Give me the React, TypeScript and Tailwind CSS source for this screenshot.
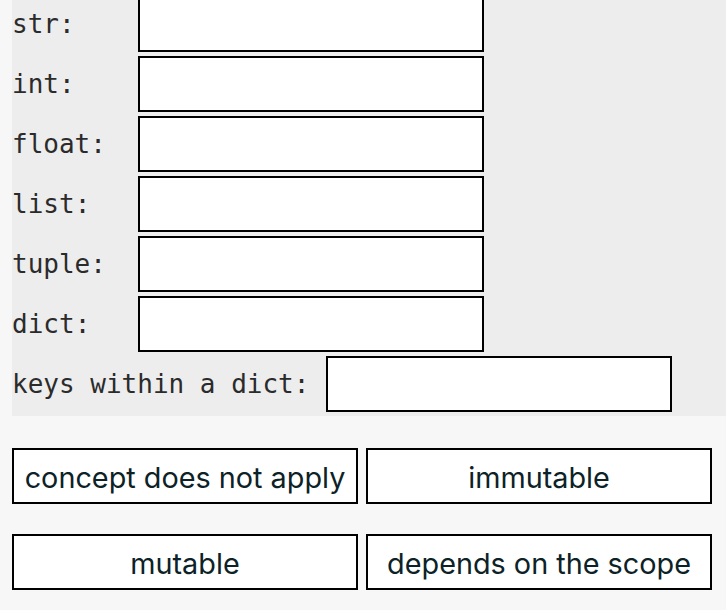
const typeRows = ["str", "int", "float", "list", "tuple", "dict"];

const answers = [
  "concept does not apply",
  "immutable",
  "mutable",
  "depends on the scope",
];

const mono = "font-['DejaVu_Sans_Mono',monospace] text-[26px] text-[#2b2b2b]";

export default function App() {
  return (
    <div className="min-h-screen bg-[#f7f7f7] pl-3">
      {/* drop targets, one per type */}
      <div className="-mt-1 flex flex-col gap-1 bg-[#ededed] pb-1">
        {typeRows.map((t) => (
          <div key={t} className="flex items-center">
            <span className={`w-[126px] leading-none ${mono}`}>{t}:</span>
            <div className="h-14 w-[346px] border-2 border-black bg-white" />
          </div>
        ))}
        <div className="flex items-center gap-[17px]">
          <span className={`leading-none whitespace-pre ${mono}`}>keys within a dict:</span>
          <div className="h-14 w-[346px] border-2 border-black bg-white" />
        </div>
      </div>

      {/* draggable answers */}
      <div className="mt-8 grid grid-cols-[346px_346px] gap-x-2 gap-y-[30px]">
        {answers.map((a) => (
          <button
            key={a}
            className="flex h-14 items-center justify-center border-2 border-black bg-white pt-[3px] font-['Inter',sans-serif] text-[28.8px] text-[#0c2227]"
          >
            {a}
          </button>
        ))}
      </div>
    </div>
  );
}
